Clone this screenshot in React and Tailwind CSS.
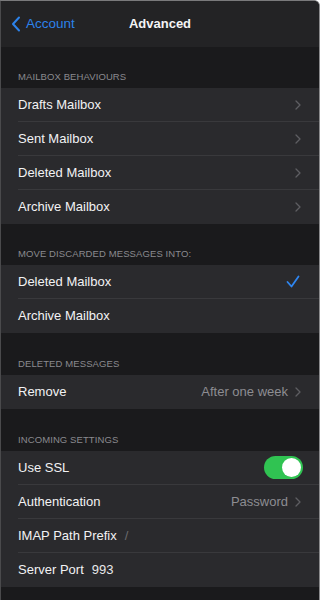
import React, { useState } from 'react';

const Chevron = () => (
  <svg width="6" height="10" viewBox="0 0 6 10" className="ml-[7px] shrink-0">
    <path d="M1 1l4 4-4 4" fill="none" stroke="#5e5e62" strokeWidth="1.3" strokeLinecap="round" strokeLinejoin="round" />
  </svg>
);

const Header = ({ children, h = 'h-[42px]' }) => (
  <div className={`${h} flex items-end pb-[6px] pl-[17px] text-[9.5px] leading-[11px] tracking-[0.1px] text-[#8a8a8f] uppercase`}>{children}</div>
);

const Row = ({ label, value, chevron, right, last, valueLeft }) => (
  <div className="flex h-[34px] items-center pl-[17px]">
    <div className={`flex h-full flex-1 items-center pr-[18px] ${last ? '' : 'border-b border-[#39393c]'}`}>
      <span className="text-[13px] text-[#f2f2f4]">{label}</span>
      {valueLeft && <span className="ml-[8px] text-[13px] text-[#e8e8ea]">{valueLeft}</span>}
      <div className="flex-1" />
      {value && <span className="text-[13px] text-[#8d8d92]">{value}</span>}
      {chevron && <Chevron />}
      {right}
    </div>
  </div>
);

const Check = () => (
  <svg width="14" height="13" viewBox="0 0 14 13" className="mr-[1px]">
    <path d="M1.5 7l4 4.5L12.5 1.5" fill="none" stroke="#2f86f0" strokeWidth="1.8" strokeLinecap="round" strokeLinejoin="round" />
  </svg>
);

const Toggle = ({ on, onClick }) => (
  <button onClick={onClick} className={`relative mr-[-2px] h-[23px] w-[39px] rounded-full ${on ? 'bg-[#30c352]' : 'bg-[#3a3a3c]'}`}>
    <span className={`absolute top-[2px] h-[19px] w-[19px] rounded-full bg-white ${on ? 'right-[2px]' : 'left-[2px]'}`} />
  </button>
);

export default function App() {
  const [ssl, setSsl] = useState(true);

  return (
    <div className="h-[600px] w-[320px] overflow-hidden rounded-tr-[6px] border-t border-r border-l border-t-[#7a7a7c] border-r-[#8a8a8c] border-l-[#4a4a4c] bg-[#1a1a1c]" style={{ fontFamily: '"Liberation Sans", Arial, sans-serif' }}>
      {/* nav bar */}
      <div className="relative flex h-[46px] items-center bg-[#232325]">
        <div className="flex items-center pl-[10px] text-[#2c82ea]">
          <svg width="10" height="16" viewBox="0 0 10 16">
            <path d="M8 1.5L2 8l6 6.5" fill="none" stroke="#2c82ea" strokeWidth="2" strokeLinecap="round" strokeLinejoin="round" />
          </svg>
          <span className="ml-[5px] text-[13.5px]">Account</span>
        </div>
        <div className="pointer-events-none absolute left-0 right-0 text-center text-[13px] font-bold text-[#f4f4f6]">Advanced</div>
      </div>

      <Header h="h-[41px]">Mailbox Behaviours</Header>
      <div className="bg-[#2a2a2d]">
        <Row label="Drafts Mailbox" chevron />
        <Row label="Sent Mailbox" chevron />
        <Row label="Deleted Mailbox" chevron />
        <Row label="Archive Mailbox" chevron last />
      </div>

      <Header h="h-[41px]">Move discarded messages into:</Header>
      <div className="bg-[#2a2a2d]">
        <Row label="Deleted Mailbox" right={<Check />} />
        <Row label="Archive Mailbox" last />
      </div>

      <Header>Deleted messages</Header>
      <div className="bg-[#2a2a2d]">
        <Row label="Remove" value="After one week" chevron last />
      </div>

      <Header>Incoming settings</Header>
      <div className="bg-[#2a2a2d]">
        <Row label="Use SSL" right={<Toggle on={ssl} onClick={() => setSsl(!ssl)} />} />
        <Row label="Authentication" value="Password" chevron />
        <Row label="IMAP Path Prefix" valueLeft={<span className="text-[#6a6a6e]">/</span>} />
        <Row label="Server Port" valueLeft="993" last />
      </div>
    </div>
  );
}
